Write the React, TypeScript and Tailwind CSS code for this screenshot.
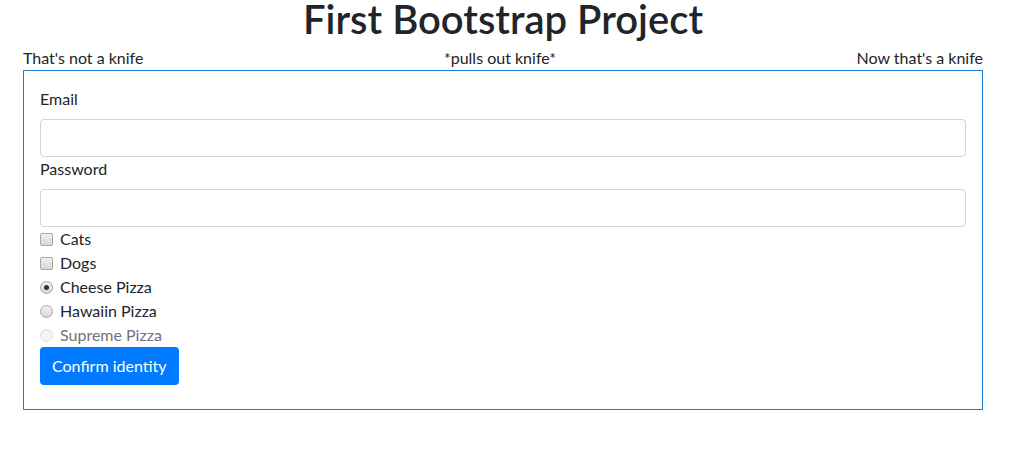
import React from "react";

const font = { fontFamily: '"Lato", "Open Sans", sans-serif' };

function Box({ checked = false, round = false, disabled = false }: { checked?: boolean; round?: boolean; disabled?: boolean }) {
  return (
    <span
      className={`relative inline-block w-[13px] h-[13px] border ${
        disabled ? "border-[#dcdcdc] bg-[#f4f4f4]" : "border-[#a6a6a6] bg-gradient-to-b from-[#f2f2f2] to-[#d6d6d6]"
      } ${round ? "rounded-full" : "rounded-[2px]"}`}
    >
      {checked && (
        <span className="absolute left-[3px] top-[3px] w-[5px] h-[5px] rounded-full bg-[#333]" />
      )}
    </span>
  );
}

function Option({ label, round = false, checked = false, disabled = false }: { label: string; round?: boolean; checked?: boolean; disabled?: boolean }) {
  return (
    <label className="flex items-center h-6 leading-6">
      <Box round={round} checked={checked} disabled={disabled} />
      <span className={`ml-[7px] ${disabled ? "text-[#6c757d]" : "text-[#212529]"}`}>{label}</span>
    </label>
  );
}

export default function App() {
  return (
    <div className="bg-white min-h-[451px] text-[#212529] text-base" style={font}>
      <div className="w-[960px] ml-[23px]">
        <h1 className="text-[40px] leading-[38px] font-semibold text-center mb-[8px]">First Bootstrap Project</h1>
        <div className="flex justify-between leading-6">
          <span>That's not a knife</span>
          <span>*pulls out knife*</span>
          <span>Now that's a knife</span>
        </div>
        <form className="border border-[#1f7fd6] px-4 pt-4 pb-6">
          <div className="leading-6 mb-2">Email</div>
          <div className="h-[38px] border border-[#ced4da] rounded" />
          <div className="leading-6 mb-2">Password</div>
          <div className="h-[38px] border border-[#ced4da] rounded" />
          <Option label="Cats" />
          <Option label="Dogs" />
          <Option label="Cheese Pizza" round checked />
          <Option label="Hawaiin Pizza" round />
          <Option label="Supreme Pizza" round disabled />
          <button type="button" className="h-[38px] px-3 rounded bg-[#007bff] text-white leading-6">
            Confirm identity
          </button>
        </form>
      </div>
    </div>
  );
}
